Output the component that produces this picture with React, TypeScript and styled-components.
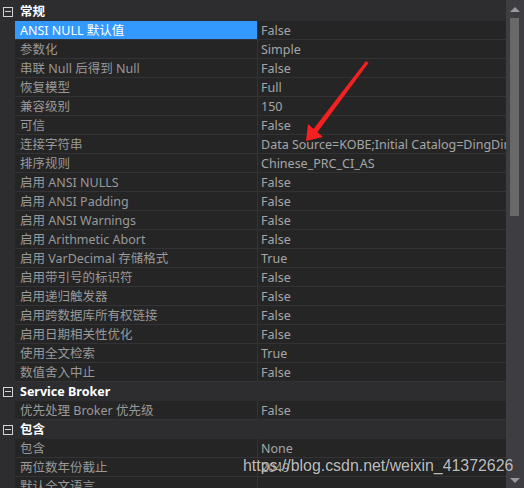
import { FC } from 'react';
import styled, { createGlobalStyle } from 'styled-components';

const GlobalStyle = createGlobalStyle`
	html,
	body {
		margin: 0;
		padding: 0;
		background: #252526;
	}
`;

type Row = { name: string; value: string; selected?: boolean };
type Category = { title: string; rows: Row[] };

const categories: Category[] = [
	{
		title: '常规',
		rows: [
			{ name: 'ANSI NULL 默认值', value: 'False', selected: true },
			{ name: '参数化', value: 'Simple' },
			{ name: '串联 Null 后得到 Null', value: 'False' },
			{ name: '恢复模型', value: 'Full' },
			{ name: '兼容级别', value: '150' },
			{ name: '可信', value: 'False' },
			{ name: '连接字符串', value: 'Data Source=KOBE;Initial Catalog=DingDing;Integrated Security=True' },
			{ name: '排序规则', value: 'Chinese_PRC_CI_AS' },
			{ name: '启用 ANSI NULLS', value: 'False' },
			{ name: '启用 ANSI Padding', value: 'False' },
			{ name: '启用 ANSI Warnings', value: 'False' },
			{ name: '启用 Arithmetic Abort', value: 'False' },
			{ name: '启用 VarDecimal 存储格式', value: 'True' },
			{ name: '启用带引号的标识符', value: 'False' },
			{ name: '启用递归触发器', value: 'False' },
			{ name: '启用跨数据库所有权链接', value: 'False' },
			{ name: '启用日期相关性优化', value: 'False' },
			{ name: '使用全文检索', value: 'True' },
			{ name: '数值舍入中止', value: 'False' }
		]
	},
	{
		title: 'Service Broker',
		rows: [{ name: '优先处理 Broker 优先级', value: 'False' }]
	},
	{
		title: '包含',
		rows: [
			{ name: '包含', value: 'None' },
			{ name: '两位数年份截止', value: '2049' },
			{ name: '默认全文语言', value: '' }
		]
	}
];

const Window = styled.div`
	position: relative;
	width: 524px;
	height: 488px;
	overflow: hidden;
	display: flex;
	background: #252526;
	font-family: 'Noto Sans', 'Noto Sans CJK SC', sans-serif;
	font-size: 12.5px;
`;

const Grid = styled.div`
	flex: 1;
	min-width: 0;
	padding-top: 2px;
	background: #2d2d30;
`;

const CategoryRow = styled.div`
	display: flex;
	align-items: center;
	height: 19px;
	background: #2d2d30;
`;

const Toggle = styled.span`
	box-sizing: border-box;
	width: 10px;
	height: 10px;
	margin: 0 7px 0 3px;
	border: 1px solid #d4d4d4;
	display: flex;
	align-items: center;
	justify-content: center;

	&::after {
		content: '';
		width: 6px;
		height: 1px;
		background: #d4d4d4;
	}
`;

const CategoryTitle = styled.span`
	color: #ffffff;
	font-weight: 700;
	line-height: 19px;
`;

const PropRow = styled.div`
	display: grid;
	grid-template-columns: 15px 243px 1fr;
	height: 19px;
`;

const Gutter = styled.div`
	background: #2d2d30;
`;

const NameCell = styled.div<{ $selected: boolean }>`
	box-sizing: border-box;
	padding: 1px 0 0 5px;
	border-bottom: 1px solid #333337;
	border-right: 1px solid #333337;
	background: ${(props) => (props.$selected ? '#3399ff' : '#252526')};
	color: ${(props) => (props.$selected ? '#ffffff' : '#999999')};
	line-height: 17px;
	white-space: nowrap;
	overflow: hidden;
`;

const ValueCell = styled.div`
	box-sizing: border-box;
	padding: 1px 0 0 3px;
	border-bottom: 1px solid #333337;
	background: #252526;
	color: #a6a6a6;
	line-height: 17px;
	white-space: nowrap;
	overflow: hidden;
`;

const ScrollBar = styled.div`
	width: 18px;
	flex-shrink: 0;
	background: #3e3e42;
	display: flex;
	flex-direction: column;
	align-items: center;
`;

const Arrow = styled.div<{ $down?: boolean }>`
	width: 0;
	height: 0;
	margin: ${(props) => (props.$down ? 'auto 0 5px' : '7px 0 6px')};
	border-left: 5px solid transparent;
	border-right: 5px solid transparent;
	${(props) => (props.$down ? 'border-top: 5px solid #999999;' : 'border-bottom: 5px solid #999999;')}
`;

const Thumb = styled.div`
	width: 9px;
	height: 198px;
	margin-left: -1px;
	background: #686868;
`;

const Pointer = styled.svg`
	position: absolute;
	left: 0;
	top: 0;
	pointer-events: none;
`;

const Watermark = styled.div`
	position: absolute;
	left: 243px;
	top: 457px;
	font-family: 'Liberation Sans', Arial, sans-serif;
	font-size: 15.9px;
	color: rgba(214, 214, 214, 0.9);
	text-shadow: 0 0 1px rgba(0, 0, 0, 0.6);
	pointer-events: none;
	white-space: nowrap;
`;

const App: FC = () => {
	return (
		<Window>
			<GlobalStyle />
			<Grid>
				{categories.map((cat) => (
					<div key={cat.title}>
						<CategoryRow>
							<Toggle />
							<CategoryTitle>{cat.title}</CategoryTitle>
						</CategoryRow>
						{cat.rows.map((row) => (
							<PropRow key={row.name}>
								<Gutter />
								<NameCell $selected={!!row.selected}>{row.name}</NameCell>
								<ValueCell>{row.value}</ValueCell>
							</PropRow>
						))}
					</div>
				))}
			</Grid>
			<ScrollBar>
				<Arrow />
				<Thumb />
				<Arrow $down />
			</ScrollBar>
			<Pointer width="524" height="488" viewBox="0 0 524 488">
				<polygon
					points="366,61 368.5,63 317.5,132 323,137 306,141 308,124 313.5,129"
					fill="#f52020"
				/>
			</Pointer>
			<Watermark>https://blog.csdn.net/weixin_41372626</Watermark>
		</Window>
	);
};

export default App;
